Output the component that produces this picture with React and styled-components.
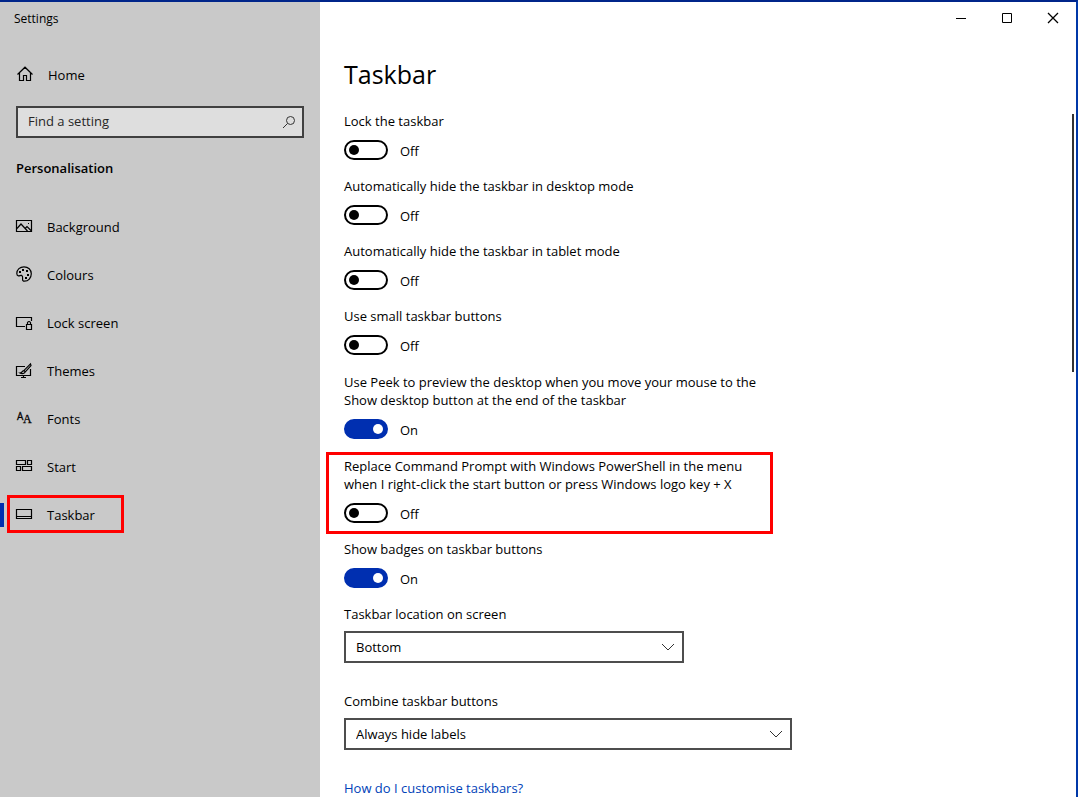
import React, { useState } from 'react';
import styled, { createGlobalStyle } from 'styled-components';

const GlobalStyle = createGlobalStyle`
    * {
        box-sizing: border-box;
    }
    body {
        margin: 0;
        background: #fff;
        color: #000;
        font-family: "Open Sans", "Noto Sans", sans-serif;
        font-size: 13px;
        line-height: 18px;
    }
    button, input, select {
        font: inherit;
        color: inherit;
    }
`;

const Window = styled.div`
    display: flex;
    height: 100vh;
    overflow: hidden;
    border-top: 2px solid #00258a;
    border-right: 2px solid #0038a8;
`;

const Sidebar = styled.aside`
    flex: 0 0 320px;
    background: #c9c9c9;
`;

const AppTitle = styled.div`
    padding: 0 14px;
    font-size: 12px;
    line-height: 34px;
`;

const NavLink = styled.a`
    position: relative;
    display: flex;
    align-items: center;
    gap: 15px;
    height: 48px;
    padding: 0 16px;
    color: #000;
    text-decoration: none;

    &::before {
        content: "";
        position: absolute;
        left: 0;
        width: 4px;
        height: 24px;
        background: ${({ $active }) => ($active ? '#002fb0' : 'transparent')};
    }
`;

const HomeLink = styled(NavLink)`
    gap: 16px;
    margin-top: 15px;
`;

const NavIcon = styled.svg`
    width: 17px;
    height: 16px;
    margin: 0 -1px 2px 0;
    overflow: visible;
    fill: none;
    stroke: #000;
    stroke-width: 1.2;
`;

const NavMark = styled.span`
    position: absolute;
    top: 4px;
    left: 7px;
    width: 117px;
    height: 38px;
    border: 3px solid #f00;
`;

const SearchBox = styled.form`
    display: flex;
    align-items: center;
    height: 32px;
    margin: 7px 16px 21px;
    padding-right: 6px;
    border: 2px solid #404040;
    background: #dedede;
`;

const SearchInput = styled.input`
    flex: 1;
    min-width: 0;
    padding: 0 10px 2px;
    border: none;
    outline: none;
    background: transparent;

    &::placeholder {
        color: #262626;
        opacity: 1;
    }
`;

const SearchButton = styled.button`
    display: flex;
    padding: 0;
    border: none;
    background: none;
`;

const Section = styled.h2`
    margin: 0 16px 26px;
    font-size: 13px;
    font-weight: 600;
`;

const Main = styled.main`
    flex: 1;
    min-width: 0;
    display: flex;
    flex-direction: column;
`;

const TitleBar = styled.div`
    display: flex;
    justify-content: flex-end;
    flex: none;
`;

const WindowButton = styled.button`
    display: flex;
    align-items: center;
    justify-content: center;
    width: 46px;
    height: 32px;
    padding: 0;
    border: none;
    background: none;
`;

const Body = styled.div`
    flex: 1;
    min-height: 0;
    display: flex;
`;

const Content = styled.div`
    flex: 1;
    min-width: 0;
    overflow-y: auto;
    scrollbar-width: none;
    padding: 22px 24px 0;
`;

const ScrollTrack = styled.div`
    flex: none;
    width: 4px;
    padding-top: 80px;
`;

const ScrollThumb = styled.div`
    width: 2px;
    height: 258px;
    background: #333;
`;

const Heading = styled.h1`
    margin: 0 0 20px;
    font-size: 25px;
    font-weight: 400;
    line-height: 36px;
`;

const Setting = styled.div`
    position: relative;
    max-width: 430px;
    margin-bottom: 17px;
    padding-top: ${({ $long }) => ($long ? '1px' : '0')};
`;

const SettingMark = styled.span`
    position: absolute;
    inset: -4px 1px -11px -18px;
    border: 3px solid #f00;
    pointer-events: none;
`;

const Label = styled.label`
    display: block;
`;

const ToggleRow = styled.div`
    display: flex;
    align-items: center;
    gap: 12px;
    height: 20px;
    margin-top: 10px;
`;

const Switch = styled.input`
    appearance: none;
    display: flex;
    align-items: center;
    justify-content: ${({ checked }) => (checked ? 'flex-end' : 'flex-start')};
    width: 44px;
    height: 20px;
    margin: 0;
    padding: 0 3px;
    border: 2px solid ${({ checked }) => (checked ? '#002fb0' : '#000')};
    border-radius: 10px;
    background: ${({ checked }) => (checked ? '#002fb0' : '#fff')};

    &::before {
        content: "";
        width: 10px;
        height: 10px;
        border-radius: 50%;
        background: ${({ checked }) => (checked ? '#fff' : '#000')};
    }
`;

const State = styled.span`
    padding-top: 2px;
`;

const Field = styled.div`
    margin-bottom: 29px;
`;

const SelectBox = styled.div`
    display: grid;
    align-items: center;
    max-width: ${({ $width }) => $width};
    margin-top: 8px;

    > * {
        grid-area: 1 / 1;
    }
    > svg {
        justify-self: end;
        margin-right: 9px;
        pointer-events: none;
    }
`;

const Select = styled.select`
    appearance: none;
    width: 100%;
    height: 32px;
    padding: 0 30px 0 10px;
    border: 2px solid #4d4d4d;
    border-radius: 0;
    background: #fff;
`;

const HelpLink = styled.a`
    color: #0042b8;
    text-decoration: none;
`;

const icons = {
    home: (
        <path d="M1.5 8.5 L9 1.2 L16.5 8.5 M3.5 7 V14.5 H7.5 V9.5 H10.5 V14.5 H14.5 V7" />
    ),
    background: (
        <>
            <path d="M.5 2.5H15.5V13.5H.5Z" />
            <path d="M1 10.5 L5 6 L11.5 13 M9 10.5 L11 8.5 L15.5 13" />
            <path d="M12 5.5H13" />
        </>
    ),
    colours: (
        <>
            <path d="M.8 7.5C.8 3.5 4 .8 8 .8C12.2 .8 15.3 3.8 15.3 7.8C15.3 12 12.3 15.2 8.5 15.2C7 15.2 6.4 14.3 6.6 13C6.8 11.4 6.9 10 5.6 9.4C4.4 8.9 3.7 10.2 2.4 9.9C1.2 9.6 .8 8.6 .8 7.5Z" />
            <path d="M3 6H5M6 4H8M10 5H12M11 9H13M9 12H11" strokeWidth="2" />
        </>
    ),
    lock: (
        <>
            <path d="M9 12.5H.5V3.5H15.5V7" />
            <path d="M10.5 10.5H15.5V15.5H10.5ZM11.5 10V8.5Q13 6.5 14.5 8.5V10" />
        </>
    ),
    themes: (
        <>
            <path d="M9 4.5H.5V13.5H14.5V7M7.5 13.5V15.5M5 15.5H10" />
            <path d="M14.5 1.8L8 8.4L9.3 9.8L15 3.6Z M8 8.6C6 8.6 6.6 10.8 4 11C6 12.2 9 11.6 9 9.8" />
        </>
    ),
    start: (
        <path d="M.5 2.5H9.5V6.5H.5ZM11.5 2.5H15.5V6.5H11.5ZM.5 8.5H4.5V12.5H.5ZM6.5 8.5H15.5V12.5H6.5Z" />
    ),
    taskbar: (
        <path d="M.5 3.5H15.5V12.5H.5ZM.5 10.5H15.5" />
    ),
    fonts: (
        <g fill="#000" strokeWidth=".3">
            <text x="1" y="10" fontFamily="Open Sans" fontSize="10">A</text>
            <text x="7" y="13" fontFamily="Liberation Serif" fontSize="12">A</text>
        </g>
    ),
};

const navItems = [
    { id: 'background', text: 'Background' },
    { id: 'colours', text: 'Colours' },
    { id: 'lock', text: 'Lock screen' },
    { id: 'themes', text: 'Themes' },
    { id: 'fonts', text: 'Fonts' },
    { id: 'start', text: 'Start' },
    { id: 'taskbar', text: 'Taskbar', active: true },
];

const toggles = [
    { id: 'lock-taskbar', text: 'Lock the taskbar' },
    { id: 'hide-desktop', text: 'Automatically hide the taskbar in desktop mode' },
    { id: 'hide-tablet', text: 'Automatically hide the taskbar in tablet mode' },
    { id: 'small-buttons', text: 'Use small taskbar buttons' },
    { id: 'peek', text: 'Use Peek to preview the desktop when you move your mouse to the Show desktop button at the end of the taskbar', on: true, long: true },
    { id: 'powershell', text: 'Replace Command Prompt with Windows PowerShell in the menu when I right-click the start button or press Windows logo key + X', long: true, marked: true },
    { id: 'badges', text: 'Show badges on taskbar buttons', on: true },
];

const ToggleSetting = ({ id, text, on = false, long = false, marked = false }) => {
    const [checked, setChecked] = useState(on);

    return (
        <Setting $long={long}>
            <Label htmlFor={id}>{text}</Label>
            <ToggleRow>
                <Switch type="checkbox" role="switch" id={id} checked={checked} onChange={() => setChecked(!checked)} />
                <State>{checked ? 'On' : 'Off'}</State>
            </ToggleRow>
            {marked && <SettingMark />}
        </Setting>
    );
};

const SelectField = ({ id, label, width, options }) => (
    <Field>
        <Label htmlFor={id}>{label}</Label>
        <SelectBox $width={width}>
            <Select id={id}>
                {options.map((option) => <option key={option}>{option}</option>)}
            </Select>
            <svg width="14" height="8" fill="none" stroke="#333">
                <path d="M1 1L7 7L13 1" />
            </svg>
        </SelectBox>
    </Field>
);

const App = () => {
    return (
        <Window>
            <GlobalStyle />
            <Sidebar>
                <AppTitle>Settings</AppTitle>
                <HomeLink href="#home">
                    <NavIcon viewBox="0 0 17 16">{icons.home}</NavIcon>
                    Home
                </HomeLink>
                <SearchBox onSubmit={(e) => e.preventDefault()}>
                    <SearchInput type="text" aria-label="Find a setting" placeholder="Find a setting" />
                    <SearchButton type="submit" aria-label="Search">
                        <svg width="14" height="14" fill="none" stroke="#333">
                            <circle cx="8.5" cy="5.5" r="4" />
                            <path d="M5.5 8.5L1 13" />
                        </svg>
                    </SearchButton>
                </SearchBox>
                <Section>Personalisation</Section>
                <nav>
                    {navItems.map((item) => (
                        <NavLink key={item.id} href={`#${item.id}`} $active={item.active}>
                            <NavIcon viewBox="0 0 17 16">{icons[item.id]}</NavIcon>
                            {item.text}
                            {item.active && <NavMark />}
                        </NavLink>
                    ))}
                </nav>
            </Sidebar>
            <Main>
                <TitleBar>
                    <WindowButton aria-label="Minimise">
                        <svg width="12" height="12" stroke="#000"><path d="M1 6.5H11" /></svg>
                    </WindowButton>
                    <WindowButton aria-label="Maximise">
                        <svg width="12" height="12" fill="none" stroke="#000"><path d="M1.5 1.5H10.5V10.5H1.5Z" /></svg>
                    </WindowButton>
                    <WindowButton aria-label="Close">
                        <svg width="12" height="12" stroke="#000" strokeWidth="1.3"><path d="M1 1L11 11M11 1L1 11" /></svg>
                    </WindowButton>
                </TitleBar>
                <Body>
                    <Content>
                        <Heading>Taskbar</Heading>
                        {toggles.map((toggle) => <ToggleSetting key={toggle.id} {...toggle} />)}
                        <SelectField
                            id="location"
                            label="Taskbar location on screen"
                            width="340px"
                            options={['Bottom', 'Left', 'Right', 'Top']}
                        />
                        <SelectField
                            id="combine"
                            label="Combine taskbar buttons"
                            width="448px"
                            options={['Always hide labels', 'When taskbar is full', 'Never']}
                        />
                        <HelpLink href="#help">How do I customise taskbars?</HelpLink>
                    </Content>
                    <ScrollTrack>
                        <ScrollThumb />
                    </ScrollTrack>
                </Body>
            </Main>
        </Window>
    );
};

export default App;
